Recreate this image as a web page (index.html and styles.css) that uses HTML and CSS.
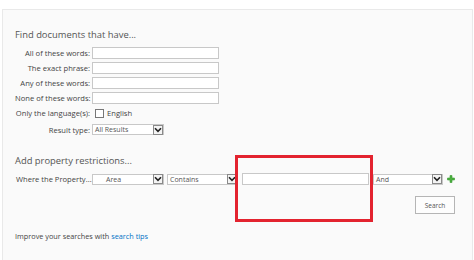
FILE: index.html
```html
<!DOCTYPE html>
<html lang="en">
<head>
    <meta charset="UTF-8">
    <meta name="viewport" content="width=device-width, initial-scale=1.0">
    <title>Advanced Search</title>
    <link rel="stylesheet" href="styles.css">
</head>
<body>

    <div class="panel">
        <h2 class="section-title">Find documents that have...</h2>

        <div class="fields">
            <label>All of these words:</label>
            <input type="text" class="text-box">
            <label>The exact phrase:</label>
            <input type="text" class="text-box">
            <label>Any of these words:</label>
            <input type="text" class="text-box">
            <label>None of these words:</label>
            <input type="text" class="text-box">
            <label>Only the language(s):</label>
            <div class="check"><span class="box"></span>English</div>
            <label class="result-label">Result type:</label>
            <div class="select result-select">
                <span class="value">All Results</span>
                <span class="arrow"><svg width="8" height="6" viewBox="0 0 8 6"><path d="M1 1.2 L4 4.4 L7 1.2" fill="none" stroke="#222" stroke-width="1.6"/></svg></span>
            </div>
        </div>

        <h2 class="section-title second">Add property restrictions...</h2>

        <div class="property-row">
            <label>Where the Property...</label>
            <div class="select prop-select">
                <span class="value indent">Area</span>
                <span class="arrow"><svg width="8" height="6" viewBox="0 0 8 6"><path d="M1 1.2 L4 4.4 L7 1.2" fill="none" stroke="#222" stroke-width="1.6"/></svg></span>
            </div>
            <div class="select op-select">
                <span class="value">Contains</span>
                <span class="arrow"><svg width="8" height="6" viewBox="0 0 8 6"><path d="M1 1.2 L4 4.4 L7 1.2" fill="none" stroke="#222" stroke-width="1.6"/></svg></span>
            </div>
            <input type="text" class="text-box value-box">
            <div class="select and-select">
                <span class="value">And</span>
                <span class="arrow"><svg width="8" height="6" viewBox="0 0 8 6"><path d="M1 1.2 L4 4.4 L7 1.2" fill="none" stroke="#222" stroke-width="1.6"/></svg></span>
            </div>
            <svg class="add-icon" width="8" height="8" viewBox="0 0 8 8">
                <path d="M3 0.5 H5 V3 H7.5 V5 H5 V7.5 H3 V5 H0.5 V3 H3 Z" fill="#4caf3f" stroke="#3b9a32" stroke-width="0.6" stroke-linejoin="round"/>
            </svg>
        </div>

        <div class="button-row">
            <button class="search-btn">Search</button>
        </div>

        <p class="tips">Improve your searches with <a href="#">search tips</a></p>
    </div>

    <!-- annotation drawn over the screenshot -->
    <div class="highlight"></div>

</body>
</html>
```

FILE: styles.css
```css
body {
    margin: 0;
    padding: 0;
    background: #fff;
    font-family: "Open Sans", "Noto Sans", sans-serif;
    color: #444;
    position: relative;
    height: 260px;
    overflow: hidden;
}
.panel {
    margin: 9px 0 0 2px;
    width: 471px;
    height: 260px;
    border: 1px solid #e9e9e9;
    background: #fafafa;
    padding: 0 0 0 12px;
    box-sizing: border-box;
}
.section-title {
    font-size: 9.4px;
    font-weight: 400;
    color: #555;
    margin: 0;
    padding-top: 18px;
    line-height: 14px;
}
.section-title.second {
    padding-top: 20px;
}
.fields {
    display: grid;
    grid-template-columns: 75px 127px;
    grid-auto-rows: 12px;
    row-gap: 3px;
    column-gap: 2px;
    margin-top: 5px;
    align-items: center;
}
.fields label, .property-row label {
    font-size: 7.6px;
    text-align: right;
    white-space: nowrap;
    color: #444;
}
.text-box {
    height: 12px;
    width: 127px;
    box-sizing: border-box;
    border: 1px solid #c8c8c8;
    background: #fff;
    padding: 0;
    margin: 0;
    outline: none;
}
.check {
    display: flex;
    align-items: center;
    font-size: 7.6px;
    padding-left: 3px;
}
.box {
    width: 7px;
    height: 7px;
    border: 1px solid #777;
    background: #fff;
    margin-right: 3px;
}
.select {
    height: 11px;
    box-sizing: border-box;
    border: 1px solid #c8c8c8;
    background: #fff;
    display: flex;
    align-items: center;
    justify-content: space-between;
    font-size: 7px;
    color: #555;
}
.result-label {
    margin-top: 3px;
}
.result-select {
    width: 72px;
    margin-top: 3px;
}
.value {
    padding-left: 2px;
    white-space: nowrap;
}
.value.indent {
    padding-left: 13px;
}
.arrow {
    width: 10px;
    height: 10px;
    box-sizing: border-box;
    border: 1px solid #8a8a8a;
    background: #f4f4f4;
    display: flex;
    align-items: center;
    justify-content: center;
}
.property-row {
    display: flex;
    align-items: center;
    margin-top: 5px;
    height: 12px;
}
.property-row label {
    width: 77px;
    text-align: left;
    padding-left: 1px;
    box-sizing: border-box;
}
.prop-select {
    width: 72px;
}
.op-select {
    width: 71px;
    margin-left: 3px;
}
.value-box {
    margin-left: 4px;
}
.and-select {
    width: 70px;
    margin-left: 4px;
}
.add-icon {
    margin-left: 4px;
}
.button-row {
    display: flex;
    justify-content: flex-end;
    padding-right: 17px;
    margin-top: 11px;
}
.search-btn {
    width: 40px;
    height: 18px;
    border: 1px solid #b5b5b5;
    background: #fdfdfd;
    font-family: "Open Sans", "Noto Sans", sans-serif;
    font-size: 6.5px;
    color: #555;
    padding: 0;
}
.tips {
    font-size: 7.3px;
    margin: 17px 0 0 0;
    color: #444;
}
.tips a {
    color: #0072c6;
    text-decoration: none;
}
.highlight {
    position: absolute;
    left: 235px;
    top: 155px;
    width: 138px;
    height: 67px;
    box-sizing: border-box;
    border: 3px solid #e3232f;
}
```
